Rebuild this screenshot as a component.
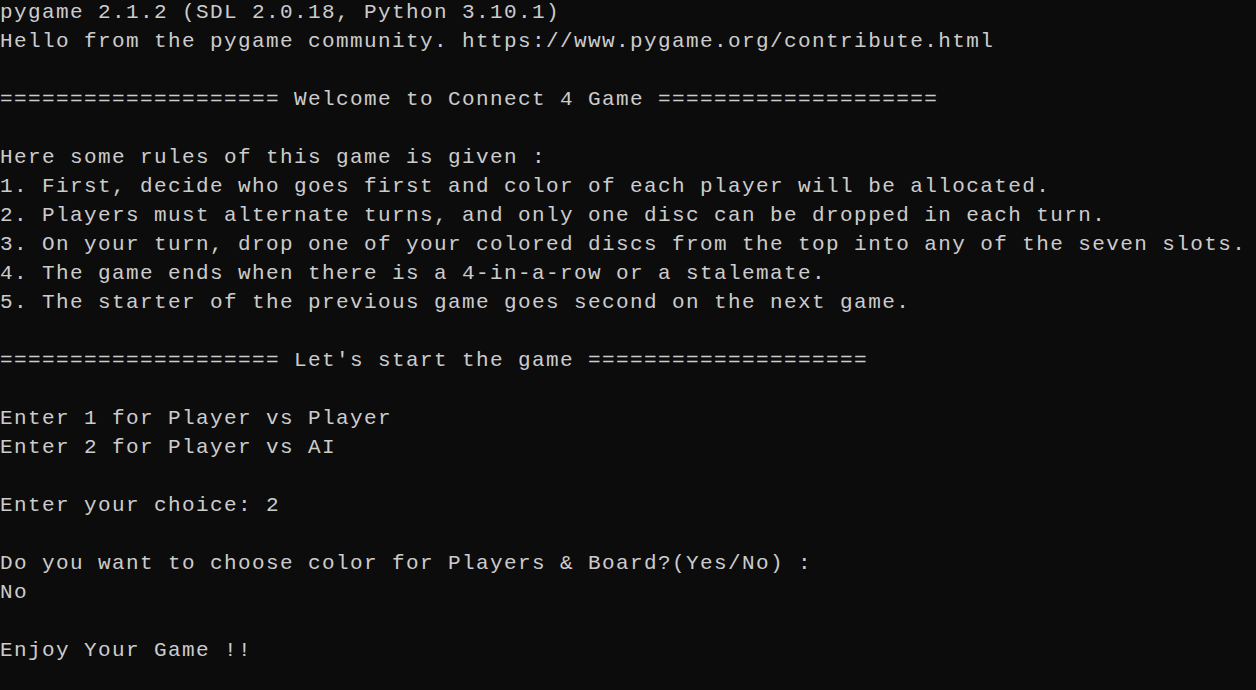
const lines = [
  "pygame 2.1.2 (SDL 2.0.18, Python 3.10.1)",
  "Hello from the pygame community. https://www.pygame.org/contribute.html",
  "",
  "==================== Welcome to Connect 4 Game ====================",
  "",
  "Here some rules of this game is given :",
  "1. First, decide who goes first and color of each player will be allocated.",
  "2. Players must alternate turns, and only one disc can be dropped in each turn.",
  "3. On your turn, drop one of your colored discs from the top into any of the seven slots.",
  "4. The game ends when there is a 4-in-a-row or a stalemate.",
  "5. The starter of the previous game goes second on the next game.",
  "",
  "==================== Let's start the game ====================",
  "",
  "Enter 1 for Player vs Player",
  "Enter 2 for Player vs AI",
  "",
  "Enter your choice: 2",
  "",
  "Do you want to choose color for Players & Board?(Yes/No) :",
  "No",
  "",
  "Enjoy Your Game !!",
];

export default function App() {
  return (
    <div className="w-[1256px] h-[690px] overflow-hidden bg-[#0c0c0c] text-[#cccccc]">
      <div
        className="-mt-[2px] text-[21px] leading-[29px] tracking-[1.4px] whitespace-pre"
        style={{ fontFamily: '"Liberation Mono", monospace' }}
      >
        {lines.map((l, i) => (
          <div key={i} className="h-[29px]">
            {l}
          </div>
        ))}
      </div>
    </div>
  );
}
